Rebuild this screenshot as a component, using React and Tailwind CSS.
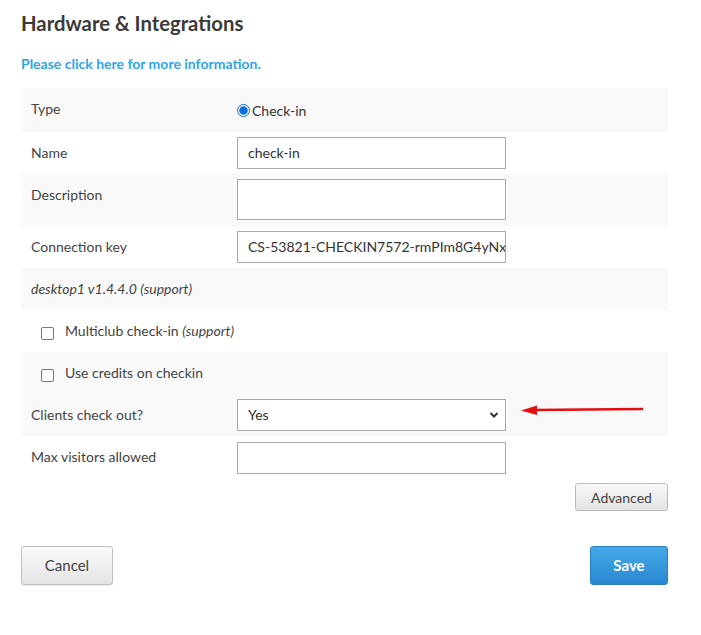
import React from "react";

const font = { fontFamily: "Lato, 'Noto Sans', sans-serif" };

function Label({ children, className = "" }) {
  return (
    <div className={"pl-[10px] pt-[11px] text-[14px] leading-[20px] text-[#444] " + className}>
      {children}
    </div>
  );
}

function TextInput({ value = "", tall = false }) {
  return (
    <div
      className={
        "w-[269px] border border-[#aaa] bg-white px-[10px] text-[14px] text-[#333] leading-[30px] overflow-hidden whitespace-nowrap " +
        (tall ? "h-[41px]" : "h-[32px]")
      }
    >
      {value}
    </div>
  );
}

function Checkbox() {
  return <span className="inline-block w-[13px] h-[13px] rounded-[2px] border border-[#767676] bg-white" />;
}

export default function App() {
  return (
    <div className="relative min-h-[635px] w-[701px] bg-white" style={font}>
      <div className="pl-[21px] w-[668px]">
        <h3 className="pt-[10px] text-[20.3px] leading-[26px] font-bold text-[#3a3a3a]">Hardware &amp; Integrations</h3>
        <div className="mt-[20px] text-[14px] leading-[16px] font-bold text-[#2fa4e7]">
          Please click here for more information.
        </div>

        <div className="mt-[16px] w-[647px]">
          {/* Type */}
          <div className="grid grid-cols-[216px_1fr] h-[44px] bg-[#f9f9f9]">
            <Label>Type</Label>
            <div className="flex items-center gap-[2px] pt-[1px] text-[14px] text-[#333]">
              <svg width="13" height="13" viewBox="0 0 13 13">
                <circle cx="6.5" cy="6.5" r="6" fill="#fff" stroke="#0b6fe0" strokeWidth="1" />
                <circle cx="6.5" cy="6.5" r="4.3" fill="#0b6fe0" />
              </svg>
              <span>Check-in</span>
            </div>
          </div>
          {/* Name */}
          <div className="grid grid-cols-[216px_1fr] h-[42px]">
            <Label>Name</Label>
            <div className="pt-[5px]">
              <TextInput value="check-in" />
            </div>
          </div>
          {/* Description */}
          <div className="grid grid-cols-[216px_1fr] h-[52px] bg-[#f9f9f9]">
            <Label>Description</Label>
            <div className="pt-[5px]">
              <TextInput tall />
            </div>
          </div>
          {/* Connection key */}
          <div className="grid grid-cols-[216px_1fr] h-[42px]">
            <Label>Connection key</Label>
            <div className="pt-[5px]">
              <TextInput value="CS-53821-CHECKIN7572-rmPIm8G4yNxQ2" />
            </div>
          </div>
          {/* desktop1 */}
          <div className="h-[42px] bg-[#f9f9f9]">
            <Label className="italic">desktop1 v1.4.4.0 (support)</Label>
          </div>
          {/* Multiclub */}
          <div className="h-[42px] pl-[20px] pt-[11px] flex items-start gap-[11px] text-[14px] leading-[20px] text-[#444]">
            <span className="pt-[4px]"><Checkbox /></span>
            <span>
              Multiclub check-in <span className="italic">(support)</span>
            </span>
          </div>
          {/* Use credits */}
          <div className="h-[42px] pl-[20px] pt-[11px] flex items-start gap-[11px] text-[14px] leading-[20px] text-[#444] bg-[#f9f9f9]">
            <span className="pt-[4px]"><Checkbox /></span>
            <span>Use credits on checkin</span>
          </div>
          {/* Clients check out */}
          <div className="grid grid-cols-[216px_1fr] h-[42px] bg-[#f9f9f9]">
            <Label>Clients check out?</Label>
            <div className="pt-[5px]">
              <div className="w-[269px] h-[32px] border border-[#aaa] bg-white pl-[10px] pr-[6px] flex items-center justify-between text-[14px] leading-[20px] text-[#333]">
                <span>Yes</span>
                <svg width="10" height="8" viewBox="0 0 10 8">
                  <path d="M1.5 2 L5 5.5 L8.5 2" fill="none" stroke="#333" strokeWidth="2" />
                </svg>
              </div>
            </div>
          </div>
          {/* Max visitors */}
          <div className="grid grid-cols-[216px_1fr] h-[42px]">
            <Label>Max visitors allowed</Label>
            <div className="pt-[6px]">
              <TextInput />
            </div>
          </div>
        </div>

        <div className="flex justify-end mt-[5px]">
          <button className="h-[28px] w-[93px] rounded-[3px] border border-[#bbb] bg-gradient-to-b from-[#f8f8f8] to-[#e3e3e3] text-[14px] text-[#444]">
            Advanced
          </button>
        </div>

        <div className="flex justify-between mt-[35px]">
          <button className="h-[39px] w-[92px] rounded-[3px] border border-[#bfbfbf] bg-gradient-to-b from-[#fbfbfb] to-[#e4e4e4] text-[15px] text-[#444] shadow-[0_1px_1px_rgba(0,0,0,0.08)]">
            Cancel
          </button>
          <button className="h-[39px] w-[78px] rounded-[3px] border border-[#2a7fc0] bg-gradient-to-b from-[#45a8e6] to-[#2a88d2] text-[15px] font-bold text-white">
            Save
          </button>
        </div>
      </div>

      {/* annotation arrow */}
      <svg className="absolute left-[518px] top-[403px]" width="128" height="14" viewBox="0 0 128 14">
        <line x1="14" y1="7" x2="124" y2="6" stroke="#e01010" strokeWidth="2.5" strokeLinecap="round" />
        <polygon points="3,7.5 19,2.5 19,12" fill="#e01010" />
      </svg>
    </div>
  );
}
